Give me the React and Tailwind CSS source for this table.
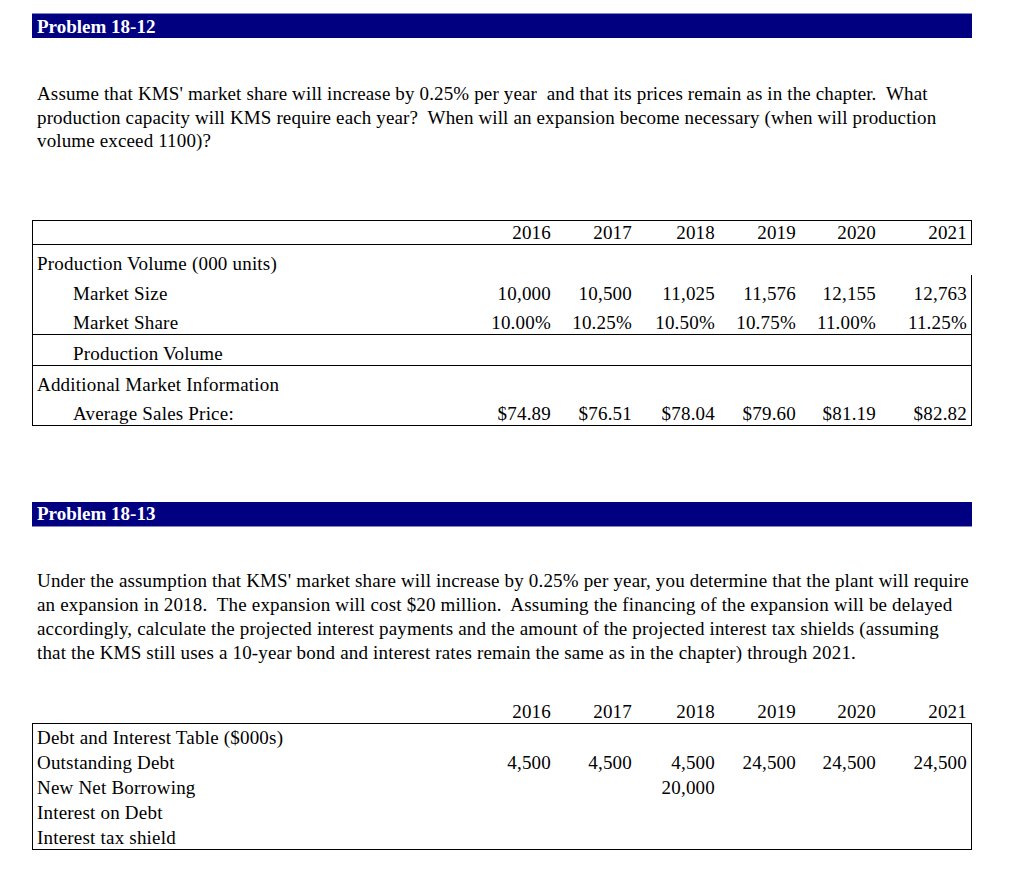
import React from 'react';

const years = ['2016', '2017', '2018', '2019', '2020', '2021'];

const cols = 'grid grid-cols-[437px_81px_81px_83px_81px_80px_95px]';

const Row = ({ label, values = [], indent, className = '' }) => (
  <div className={`${cols} w-[940px] items-end tracking-[0.2px] ${className}`}>
    <div className={`pb-[2px] leading-[19px] whitespace-nowrap ${indent ? 'pl-[40px]' : 'pl-[4px]'}`}>{label}</div>
    {years.map((y, i) => (
      <div key={y} className={`pb-[2px] leading-[19px] text-right ${i === 5 ? 'pr-[4px]' : ''}`}>
        {values[i] || ''}
      </div>
    ))}
  </div>
);

const Banner = ({ title, className = '' }) => (
  <div className={`w-[940px] h-[25px] bg-[#000080] flex items-center pl-[5px] ${className}`}>
    <span className="text-white font-bold text-[19px] leading-none">{title}</span>
  </div>
);

export default function App() {
  return (
    <div className="w-[1024px] min-h-[871px] bg-white text-black font-['Liberation_Serif','Times_New_Roman',serif] text-[19px] pl-[32px] pt-[13px]">
      <Banner title="Problem 18-12" className="border-t border-[#8585c6]" />

      <div className="mt-[44px] pl-[5px] leading-[23.5px] whitespace-pre tracking-[0.14px]">
        <div>Assume that KMS' market share will increase by 0.25% per year  and that its prices remain as in the chapter.  What</div>
        <div>production capacity will KMS require each year?  When will an expansion become necessary (when will production</div>
        <div>volume exceed 1100)?</div>
      </div>

      {/* Production volume table */}
      <div className="mt-[67px]">
        <Row values={years} className="h-[25px] border border-black" />
        <Row label="Production Volume (000 units)" className="h-[30px] border-x border-l-black border-r-transparent" />
        <Row label="Market Size" indent values={['10,000', '10,500', '11,025', '11,576', '12,155', '12,763']} className="h-[30px] border-x border-black" />
        <Row label="Market Share" indent values={['10.00%', '10.25%', '10.50%', '10.75%', '11.00%', '11.25%']} className="h-[30px] border-x border-b border-black" />
        <Row label="Production Volume" indent className="h-[31px] border-x border-b border-black" />
        <Row label="Additional Market Information" className="h-[30px] border-x border-black" />
        <Row label="Average Sales Price:" indent values={['$74.89', '$76.51', '$78.04', '$79.60', '$81.19', '$82.82']} className="h-[30px] border-x border-b border-black" />
      </div>

      <Banner title="Problem 18-13" className="mt-[76px] border-b border-[#8585c6]" />

      <div className="mt-[42px] pl-[5px] leading-[24px] whitespace-pre tracking-[0.17px]">
        <div>Under the assumption that KMS' market share will increase by 0.25% per year, you determine that the plant will require</div>
        <div>an expansion in 2018.  The expansion will cost $20 million.  Assuming the financing of the expansion will be delayed</div>
        <div>accordingly, calculate the projected interest payments and the amount of the projected interest tax shields (assuming</div>
        <div>that the KMS still uses a 10-year bond and interest rates remain the same as in the chapter) through 2021.</div>
      </div>

      {/* Debt and interest table */}
      <div className="mt-[33px]">
        <Row values={years} className="h-[25px] border-x border-transparent" />
        <div className="w-[940px] border border-black">
          <Row label="Debt and Interest Table ($000s)" className="h-[25px] w-[938px]" />
          <Row label="Outstanding Debt" values={['4,500', '4,500', '4,500', '24,500', '24,500', '24,500']} className="h-[25px] w-[938px]" />
          <Row label="New Net Borrowing" values={['', '', '20,000']} className="h-[25px] w-[938px]" />
          <Row label="Interest on Debt" className="h-[25px] w-[938px]" />
          <Row label="Interest tax shield" className="h-[25px] w-[938px]" />
        </div>
      </div>
    </div>
  );
}
